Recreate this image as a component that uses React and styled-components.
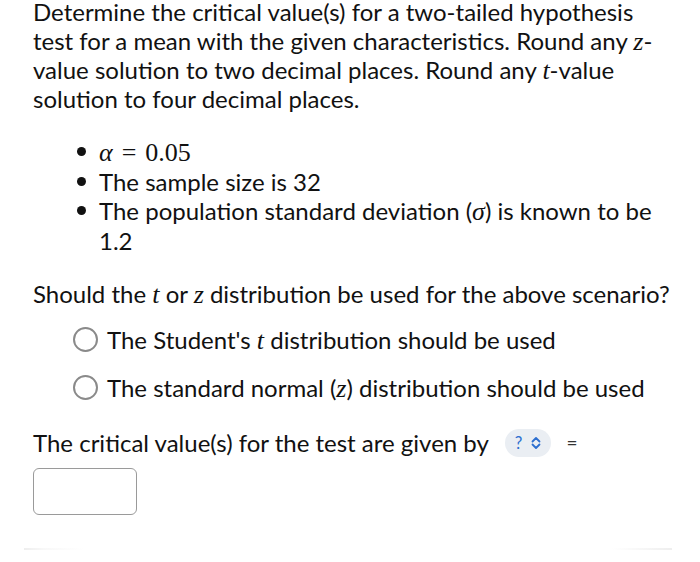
import React from "react";
import styled, { createGlobalStyle } from "styled-components";

const Global = createGlobalStyle`
  html, body { margin: 0; padding: 0; background: #fff; }
  body { font-family: Lato, "Open Sans", sans-serif; color: #111; }
`;

const Page = styled.div`
  width: 700px;
  height: 562px;
  box-sizing: border-box;
  padding: 0 22px 0 33px;
  position: relative;
  overflow: hidden;
`;

const Para = styled.p`
  margin: -3px 0 0;
  font-size: 24px;
  line-height: 29px;
  width: 626px;
`;

const Math = styled.span`
  font-family: "Liberation Serif", "Times New Roman", serif;
  font-style: ${(p) => (p.$upright ? "normal" : "italic")};
  font-size: 26px;
  line-height: 0;
`;

const Op = styled.span`
  font-family: "Liberation Serif", "Times New Roman", serif;
  font-size: 26px;
  line-height: 0;
  margin: 0 9px;
`;

const List = styled.ul`
  margin: 24px 0 0;
  padding: 0 0 0 66px;
  list-style: none;
  width: 560px;
`;

const Item = styled.li`
  position: relative;
  font-size: 24px;
  line-height: 29.5px;
  &::before {
    content: "";
    position: absolute;
    left: -22px;
    top: 10px;
    width: 9px;
    height: 9px;
    border-radius: 50%;
    background: #111;
  }
`;

const Question = styled.p`
  margin: 24px 0 0;
  font-size: 24px;
  line-height: 29px;
  white-space: nowrap;
`;

const Options = styled.div`
  display: flex;
  flex-direction: column;
  gap: 19px;
  margin-top: 17px;
  padding-left: 40px;
`;

const Option = styled.label`
  display: flex;
  align-items: center;
  gap: 9px;
  font-size: 24px;
  line-height: 29px;
  white-space: nowrap;
`;

const Radio = styled.span`
  width: 21px;
  height: 21px;
  border: 2px solid #8a8a8a;
  border-radius: 50%;
  flex-shrink: 0;
`;

const AnswerRow = styled.div`
  display: flex;
  align-items: center;
  margin-top: 26px;
  font-size: 24px;
  line-height: 29px;
  white-space: nowrap;
`;

const Pill = styled.span`
  display: inline-flex;
  align-items: center;
  gap: 9px;
  margin-left: 16px;
  height: 28px;
  padding: 0 10px 0 10px;
  background: #eaeef3;
  border-radius: 14px;
  color: #2d6fd0;
  font-size: 17px;
  line-height: 1;
`;

const Equals = styled.span`
  margin-left: 15px;
  font-size: 19px;
  color: #333;
`;

const Input = styled.div`
  margin-top: 11px;
  width: 102px;
  height: 45px;
  border: 1.5px solid #9a9a9a;
  border-radius: 6px;
`;

const Rule = styled.div`
  position: absolute;
  left: 24px;
  right: 28px;
  top: 548px;
  height: 2px;
  background: linear-gradient(to right, #eee 0, #f8f8f8 20px, #fff 60px, #fff calc(100% - 60px), #f4f4f4 calc(100% - 20px), #eee 100%);
`;

const Chevron = () => (
  <svg width="10" height="14" viewBox="0 0 10 14" fill="none" stroke="#2d6fd0" strokeWidth="1.8" strokeLinecap="round" strokeLinejoin="round">
    <path d="M1.5 5.5 L5 2 L8.5 5.5" />
    <path d="M1.5 8.5 L5 12 L8.5 8.5" />
  </svg>
);

export default function App() {
  return (
    <>
      <Global />
      <Page>
        <Para>
          Determine the critical value(s) for a two-tailed hypothesis test for a mean with the given
          characteristics. Round any <Math>z</Math>-value solution to two decimal places. Round any{" "}
          <Math>t</Math>-value solution to four decimal places.
        </Para>
        <List>
          <Item>
            <Math>α</Math>
            <Op>=</Op>
            <Math $upright>0.05</Math>
          </Item>
          <Item>The sample size is 32</Item>
          <Item>
            The population standard deviation (<Math>σ</Math>) is known to be 1.2
          </Item>
        </List>
        <Question>
          Should the <Math>t</Math> or <Math>z</Math> distribution be used for the above scenario?
        </Question>
        <Options>
          <Option>
            <Radio />
            <span>
              The Student's <Math>t</Math> distribution should be used
            </span>
          </Option>
          <Option>
            <Radio />
            <span>
              The standard normal (<Math>z</Math>) distribution should be used
            </span>
          </Option>
        </Options>
        <AnswerRow>
          The critical value(s) for the test are given by
          <Pill>
            ?
            <Chevron />
          </Pill>
          <Equals>=</Equals>
        </AnswerRow>
        <Input />
        <Rule />
      </Page>
    </>
  );
}
